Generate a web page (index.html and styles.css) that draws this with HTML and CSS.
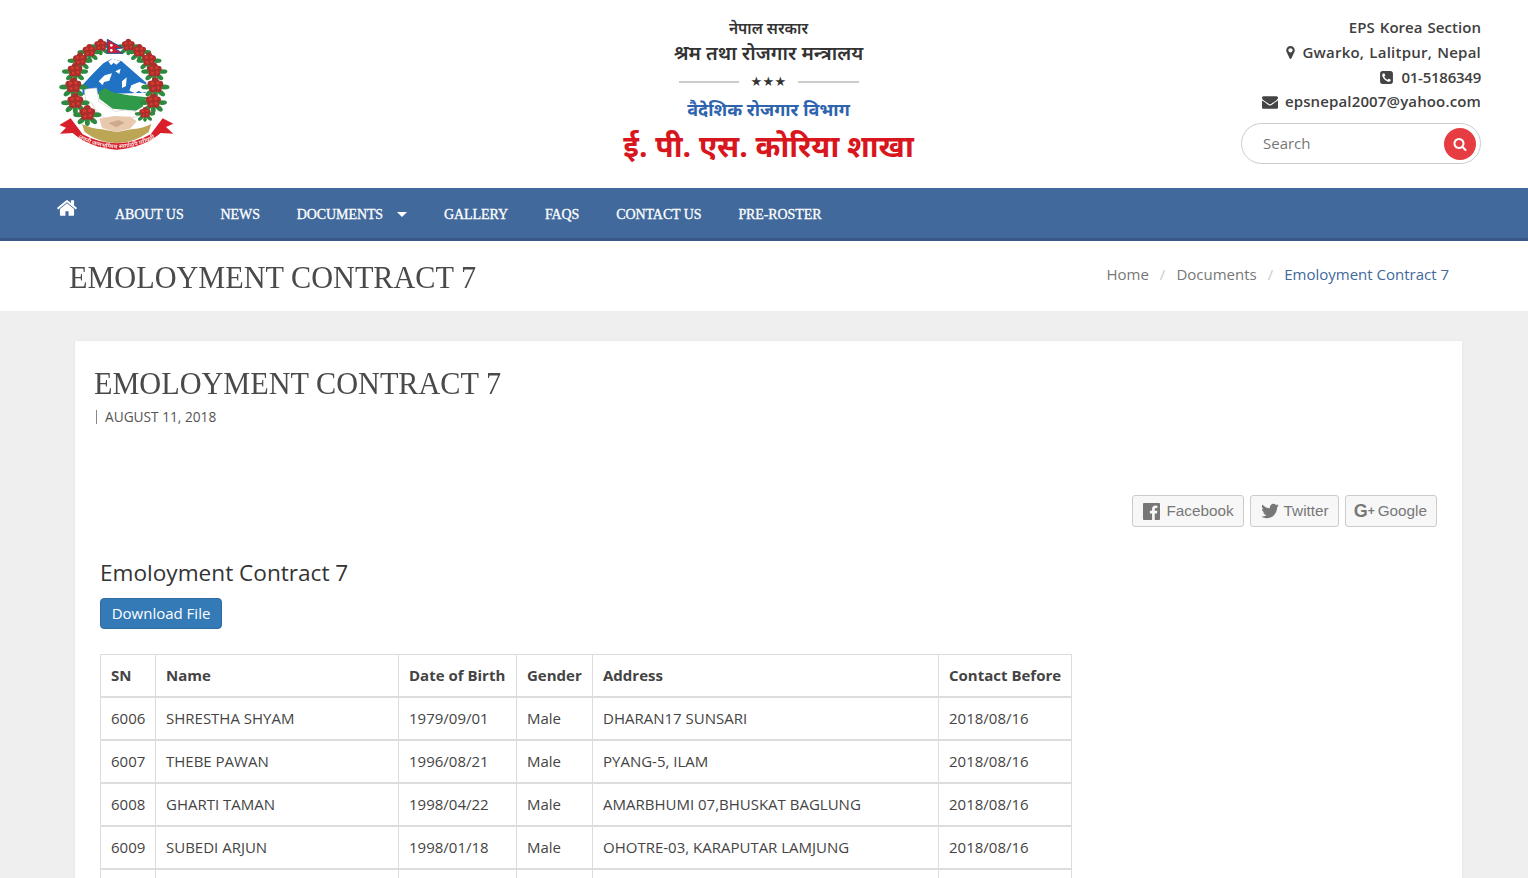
FILE: index.html
```html
<!DOCTYPE html>
<html lang="ne">
<head>
  <meta charset="UTF-8" />
  <meta name="viewport" content="width=device-width, initial-scale=1.0"/>
  <title>Emoloyment Contract 7 | EPS Korea Section</title>
  <link rel="stylesheet" href="styles.css">
</head>
<body>

  <!-- HEADER -->
  <header class="top">
    <a class="logo" href="#">
      <svg width="120" height="120" viewBox="48 48 360 360" role="img" aria-label="Emblem of Nepal">
        <defs>
          <g id="flower">
            <g fill="#2d8a3e">
              <ellipse cx="-22" cy="4" rx="12" ry="6"/><ellipse cx="22" cy="4" rx="12" ry="6"/>
              <ellipse cx="-14" cy="18" rx="11" ry="6" transform="rotate(-40 -14 18)"/>
              <ellipse cx="14" cy="18" rx="11" ry="6" transform="rotate(40 14 18)"/>
              <ellipse cx="0" cy="22" rx="6" ry="9"/>
            </g>
            <circle r="15" fill="#a92f2b"/>
            <g fill="#a92f2b">
              <circle cx="0" cy="-11" r="8"/><circle cx="11" cy="-3" r="8"/><circle cx="7" cy="9" r="8"/>
              <circle cx="-7" cy="9" r="8"/><circle cx="-11" cy="-3" r="8"/>
            </g>
            <g fill="#d93a30">
              <circle cx="-7" cy="-5" r="4"/><circle cx="6" cy="-6" r="4"/><circle cx="7" cy="6" r="3.500"/>
              <circle cx="-5" cy="8" r="3.500"/>
            </g>
          </g>
        </defs>
        <!-- mountain -->
        <path d="M128 194l32-34 30-30 25-14 30 8 30 26 44 38-2 30-190 6z" fill="#1f72c4"/>
        <path d="M205 124l12-8 24 8-12 10-8-6-8 8zM176 184l18-18 22-6-8 22-16 4-4 10zM226 154l16-8-4 16zM268 212l6-16 24-10 22 8 2 20-16 4-10-6-10 8zM246 184l14-12-2 26-12 6z" fill="#fff"/>
        <!-- hills -->
        <path d="M176 216l18-12 28 14 44 8 54 6-12 28-20 12-70-6-40-30z" fill="#2f9a49"/>
        <path d="M134 208l36-4 6 40 50 30 30-4 30 4 6 16-34 4-66 0-30-30-6-14-18-8-4-24z" fill="#fff" stroke="#cfcfcf" stroke-width="2"/>
        <!-- wheat -->
        <path d="M126 312q28 14 60 16l44 8 44-8q32-2 60-16l-8 24q-42 32-96 34-54-2-96-34z" fill="#bda556"/>
        <!-- hands -->
        <path d="M178 296l44-8 50 2 18 14-20 22-44 10-40-12z" fill="#e9c9ad"/>
        <path d="M205 310l30-10 20 8-26 14z" fill="#cfa98c"/>
        <!-- banner -->
        <path d="M58 315l34-20 36 48q46 26 102 27 56-1 102-27l36-48 32 16-22 10 22 20-38-2q-50 44-132 50-82-6-132-50l-38 2 18-18z" fill="#d9202a"/>
        <path id="motto" d="M108 349q50 34 122 36 72-2 122-36" fill="none"/>
        <text class="motto"><textPath href="#motto" startOffset="50%" text-anchor="middle">जननी जन्मभूमिश्च स्वर्गादपि गरीयसी</textPath></text>
        <!-- wreath -->
        <use href="#flower" transform="translate(182 75) scale(1)"/>
        <use href="#flower" transform="translate(148 92) scale(1.05)"/>
        <use href="#flower" transform="translate(120 118) scale(1.1)"/>
        <use href="#flower" transform="translate(105 150) scale(1.15)"/>
        <use href="#flower" transform="translate(100 196) scale(1.25)"/>
        <use href="#flower" transform="translate(106 243) scale(1.25)"/>
        <use href="#flower" transform="translate(142 279) scale(1.25)"/>
        <use href="#flower" transform="translate(265 75) scale(1)"/>
        <use href="#flower" transform="translate(298 92) scale(1.05)"/>
        <use href="#flower" transform="translate(327 118) scale(1.1)"/>
        <use href="#flower" transform="translate(343 150) scale(1.15)"/>
        <use href="#flower" transform="translate(346 196) scale(1.25)"/>
        <use href="#flower" transform="translate(340 243) scale(1.2)"/>
        <use href="#flower" transform="translate(315 278) scale(.9)"/>
        <!-- flag -->
        <path d="M202 58l46 26-22 2 22 14h-46z" fill="#c8202f" stroke="#2a4a9a" stroke-width="3"/>
        <circle cx="214" cy="76" r="4" fill="#fff"/><circle cx="214" cy="91" r="4" fill="#fff"/>
      </svg>
    </a>

    <div class="office">
      <div class="gov">नेपाल सरकार</div>
      <div class="ministry">श्रम तथा रोजगार मन्त्रालय</div>
      <div class="divider"><span class="stars">★★★</span></div>
      <div class="dept">वैदेशिक रोजगार विभाग</div>
      <div class="branch">ई. पी. एस. कोरिया शाखा</div>
    </div>

    <div class="contact">
      <div class="c-name">EPS Korea Section</div>
      <div class="c-addr"><svg class="ico ico-pin" viewBox="0 0 1792 1792"><path d="M1152 640q0-106-75-181t-181-75-181 75-75 181 75 181 181 75 181-75 75-181zm256 0q0 109-33 179l-364 774q-16 33-47.500 52t-67.500 19-67.500-19-46.500-52l-365-774q-33-70-33-179 0-212 150-362t362-150 362 150 150 362z"/></svg>Gwarko, Lalitpur, Nepal</div>
      <div class="c-tel"><svg class="ico" viewBox="0 0 1792 1792"><path d="M1408 1193q0-11-2-16t-18-16.500-40.500-25-47.500-26.500-45.500-25-28.500-15q-5-3-19-13t-25-15-21-5q-15 0-36.500 20.500t-39.500 45-38.500 45-33.500 20.500q-7 0-16.500-3.500t-15.500-6.500-17-9.500-14-8.500q-99-55-170-126.500t-127-170.500q-2-3-8.500-14t-9.500-17-6.500-15.500-3.500-16.500q0-13 20.500-33.500t45-38.500 45-39.500 20.500-36.500q0-10-5-21t-15-25-13-19q-3-6-15-28.500t-25-45.500-26.500-47.500-25-40.500-16.500-18-16-2q-48 0-101 22-46 21-80 94.500t-34 130.500q0 16 2.500 34t5 30.500 9 33 10 29.500 12.500 33 11 30q60 164 216.500 320.500t320.500 216.500q6 2 30 11t33 12.500 29.500 10 33 9 30.500 5 34 2.500q57 0 130.500-34t94.500-80q22-53 22-101zm256-777v960q0 119-84.500 203.500t-203.500 84.500h-960q-119 0-203.500-84.500t-84.500-203.500v-960q0-119 84.500-203.500t203.500-84.500h960q119 0 203.500 84.500t84.500 203.500z"/></svg>01-5186349</div>
      <div><svg class="ico ico-mail" viewBox="0 0 1792 1792"><path d="M1792 710v794q0 66-47 113t-113 47h-1472q-66 0-113-47t-47-113v-794q44 49 101 87 362 246 497 345 57 42 92.500 65.500t94.500 48 110 24.500h2q51 0 110-24.500t94.500-48 92.500-65.500q170-123 498-345 57-39 100-87zm0-294q0 79-49 151t-122 123q-376 261-468 325-10 7-42.500 30.500t-54 38-52 32.500-57.500 27-50 9h-2q-23 0-50-9t-57.500-27-52-32.500-54-38-42.500-30.500q-91-64-262-182.500t-205-142.500q-62-42-117-115.500t-55-136.500q0-78 41.500-130t118.500-52h1472q65 0 112.500 47t47.500 113z"/></svg>epsnepal2007@yahoo.com</div>
      <div class="search">
        <span class="search-text">Search</span>
        <span class="search-btn"><svg viewBox="0 0 1792 1792"><path d="M1216 832q0-185-131.500-316.500t-316.500-131.500-316.500 131.500-131.500 316.500 131.500 316.500 316.500 131.500 316.500-131.500 131.500-316.500zm512 832q0 52-38 90t-90 38q-54 0-90-38l-343-342q-179 124-399 124-143 0-273.500-55.500t-225-150-150-225-55.500-273.500 55.500-273.500 150-225 225-150 273.500-55.500 273.500 55.500 225 150 150 225 55.500 273.500q0 220-124 399l343 343q37 37 37 90z"/></svg></span>
      </div>
    </div>
  </header>

  <!-- NAV -->
  <nav class="mainnav">
    <a class="home" href="#" aria-label="Home"><svg viewBox="0 0 1792 1792"><path d="M1472 992v480q0 26-19 45t-45 19h-384v-384h-256v384h-384q-26 0-45-19t-19-45v-480q0-1 .5-3t.5-3l575-474 575 474q1 2 1 6zm223-69l-62 74q-8 9-21 11h-3q-13 0-21-7l-692-577-692 577q-12 8-24 7-13-2-21-11l-62-74q-8-10-7-23.500t11-21.500l719-599q32-26 76-26t76 26l244 204v-195q0-14 9-23t23-9h192q14 0 23 9t9 23v408l219 182q10 8 11 21.500t-7 23.500z"/></svg></a>
    <a href="#">ABOUT US</a>
    <a href="#">NEWS</a>
    <a href="#">DOCUMENTS<span class="caret"></span></a>
    <a href="#">GALLERY</a>
    <a href="#">FAQS</a>
    <a href="#">CONTACT US</a>
    <a href="#">PRE-ROSTER</a>
  </nav>

  <!-- PAGE TITLE -->
  <section class="titlebar">
    <h1>EMOLOYMENT CONTRACT 7</h1>
    <ol class="crumbs">
      <li><a href="#">Home</a></li>
      <li><a href="#">Documents</a></li>
      <li class="active">Emoloyment Contract 7</li>
    </ol>
  </section>

  <!-- CONTENT -->
  <main class="wrap">
    <article class="card">
      <h2>EMOLOYMENT CONTRACT 7</h2>
      <p class="date">AUGUST 11, 2018</p>

      <div class="share">
        <a href="#"><svg class="share-ico" viewBox="128 128 1536 1536"><path d="M1579 128q35 0 60 25t25 60v1366q0 35-25 60t-60 25h-391v-595h199l30-232h-229v-148q0-56 23.500-84t91.500-28l122-1v-207q-63-9-178-9-136 0-217.500 80t-81.500 226v171h-200v232h200v595h-735q-35 0-60-25t-25-60v-1366q0-35 25-60t60-25h1366z"/></svg>Facebook</a>
        <a href="#"><svg class="share-ico tw" viewBox="0 0 1792 1792"><path d="M1684 408q-67 98-162 167 1 14 1 42 0 130-38 259.500t-115.500 248.500-184.500 210.500-258 146-323 54.500q-271 0-496-145 35 4 78 4 225 0 401-138-105-2-188-64.500t-114-159.500q33 5 61 5 43 0 85-11-112-23-185.500-111.500t-73.500-205.500v-4q68 38 146 41-66-44-105-115t-39-154q0-88 44-163 121 149 294.500 238.500t371.500 99.500q-8-38-8-74 0-134 94.500-228.500t228.500-94.500q140 0 236 102 109-21 205-78-37 115-142 178 92-10 184-50z"/></svg>Twitter</a>
        <a href="#"><span class="gplus">G<small>+</small></span>Google</a>
      </div>

      <div class="post">
        <h3>Emoloyment Contract 7</h3>
        <a class="btn" href="#">Download File</a>

        <table class="list">
          <thead>
            <tr><th>SN</th><th>Name</th><th>Date of Birth</th><th>Gender</th><th>Address</th><th>Contact Before</th></tr>
          </thead>
          <tbody>
            <tr><td>6006</td><td>SHRESTHA SHYAM</td><td>1979/09/01</td><td>Male</td><td>DHARAN17 SUNSARI</td><td>2018/08/16</td></tr>
            <tr><td>6007</td><td>THEBE PAWAN</td><td>1996/08/21</td><td>Male</td><td>PYANG-5, ILAM</td><td>2018/08/16</td></tr>
            <tr><td>6008</td><td>GHARTI TAMAN</td><td>1998/04/22</td><td>Male</td><td>AMARBHUMI 07,BHUSKAT BAGLUNG</td><td>2018/08/16</td></tr>
            <tr><td>6009</td><td>SUBEDI ARJUN</td><td>1998/01/18</td><td>Male</td><td>OHOTRE-03, KARAPUTAR LAMJUNG</td><td>2018/08/16</td></tr>
            <tr><td>&nbsp;</td><td></td><td></td><td></td><td></td><td></td></tr>
          </tbody>
        </table>
      </div>
    </article>
  </main>

</body>
</html>
```

FILE: styles.css
```css
/* ===== Reset ===== */
*, *::before, *::after { margin:0; padding:0; box-sizing:border-box; }
html, body { height:100vh; overflow:hidden; }
body {
  font-family:'Open Sans', 'Noto Sans', sans-serif;
  background:#EFEFEF; color:#444;
  font-size:14px;
}
a { text-decoration:none; color:inherit; }
ol { list-style:none; }

/* ===== Variables ===== */
:root {
  --nav:#41699B;
  --nav-dark:#38598A;
  --text:#444;
  --serif:'Liberation Serif', 'Noto Serif', serif;
}

/* ===== Header ===== */
.top {
  background:#fff; height:188px;
  display:grid; grid-template-columns:1fr 360px 1fr; align-items:start;
  padding:0 47px 0 56px;
}
.logo { display:block; padding-top:36px; }
.logo svg { display:block; filter:blur(.3px); }
.motto { font-size:17px; font-weight:700; fill:#f6dcdc; }

.office { text-align:center; color:#333; padding-top:16px; }
.gov { font-size:15.5px; line-height:24px; font-weight:600; }
.ministry { font-size:19.6px; line-height:26px; font-weight:600; }
.divider {
  display:flex; align-items:center; justify-content:center; gap:11px;
  width:180px; margin:7px auto 0; height:18px;
}
.divider::before, .divider::after { content:''; flex:1; height:2px; background:#ccc; }
.stars { font-size:13px; line-height:18px; letter-spacing:.4px; color:#333; font-family:'DejaVu Sans', sans-serif; margin-top:-1px; }
.dept { font-size:18px; line-height:26px; font-weight:700; color:#2E63AE; margin-top:5px; }
.branch { font-size:30px; line-height:42px; font-weight:700; color:#D7161E; margin-top:3px; }

.contact {
  text-align:right; font-weight:600; font-size:15px; line-height:24.8px; padding-top:15px; color:#404040;
  letter-spacing:.14px; word-spacing:1px;
}
.c-name { letter-spacing:.05px; }
.c-addr { letter-spacing:.24px; }
.c-tel { letter-spacing:-.25px; }
.ico { width:15px; height:15px; fill:#444; vertical-align:-2px; margin-right:7px; }
.ico-pin { margin-right:4px; }
.ico-mail { width:16px; height:16px; margin-right:7px; vertical-align:-3px; }
.search {
  width:240px; height:41px; margin:9px 0 0 auto;
  border:1px solid #ccc; border-radius:21px;
  display:flex; align-items:center; justify-content:space-between;
  padding:0 4px 0 21px; letter-spacing:0;
}
.search-text { font-weight:400; font-size:15px; color:#777; }
.search-btn {
  width:32px; height:32px; border-radius:50%; background:#E53D41;
  display:flex; align-items:center; justify-content:center;
}
.search-btn svg { width:14px; height:14px; fill:#fff; }

/* ===== Nav ===== */
.mainnav {
  background:var(--nav); border-bottom:3px solid var(--nav-dark);
  height:53px; padding-left:56px;
  display:flex; align-items:center; gap:37px;
  font-family:var(--serif); font-size:14px; letter-spacing:-.1px; color:#fff;
}
.mainnav a { display:block; line-height:50px; padding-top:3px; -webkit-text-stroke:.3px #fff; }
.mainnav .home { width:22px; height:50px; padding-top:0; }
.home svg { display:block; width:22px; height:22px; fill:#fff; margin-top:9px; }
.caret {
  display:inline-block; margin-left:14px; vertical-align:2px;
  border-left:5px solid transparent; border-right:5px solid transparent; border-top:5px solid #fff;
}

/* ===== Title bar ===== */
.titlebar {
  background:#fff; height:70px; padding:0 79px 0 69px;
  display:flex; justify-content:space-between; align-items:flex-start;
}
.titlebar h1, .card h2 {
  font-family:var(--serif); font-weight:400; font-size:32px; line-height:36px; color:#4a4a4a;
  transform:scaleX(.945); transform-origin:left center;
}
.titlebar h1 { margin-top:18px; }
.crumbs { display:flex; font-size:15px; line-height:20px; color:#777; padding-top:23px; }
.crumbs li + li::before { content:'/'; color:#ccc; margin:0 11px; }
.crumbs .active { color:#41699B; }

/* ===== Content ===== */
.wrap { padding:30px 66px 0 75px; }
.card { background:#fff; padding:24px 25px 30px 19px; box-shadow:0 0 2px rgba(0,0,0,.06); }
.date { display:flex; align-items:center; gap:8px; font-size:13.7px; line-height:20px; color:#555; margin:6px 0 0 2px; }
.date::before { content:''; width:1px; height:14px; background:#888; }

.share { display:flex; justify-content:flex-end; gap:6px; margin-top:68px; font-family:'Liberation Sans', Arial, sans-serif; font-size:15.3px; color:#777; }
.share a {
  height:32px; display:flex; align-items:center; padding:0 9px 0 10px;
  background:#f7f7f7; border:1px solid #ccc; border-radius:3px;
}
.share-ico { width:17px; height:17px; fill:#777; margin-right:6px; }
.share-ico.tw { width:20px; height:20px; margin-right:4px; margin-left:-1px; }
.gplus { font-weight:700; font-size:18px; margin-right:3px; margin-left:-2px; }
.gplus small { font-size:12px; font-weight:700; vertical-align:2px; }

.post { padding-left:6px; margin-top:29px; }
.post h3 { font-weight:400; font-size:22.6px; line-height:34px; color:#333; }
.btn {
  display:inline-block; margin-top:8px; height:31px; width:122px; text-align:center; line-height:29px;
  background:#337AB7; border:1px solid #2E6DA4; border-radius:4px; color:#fff; font-size:15px;
}

.list { border-collapse:collapse; margin-top:25px; width:972px; table-layout:fixed; color:#444; }
.list th, .list td { border:1px solid #ddd; border-bottom-width:2px; padding:0 10px 1px; height:43px; text-align:left; font-size:15px; white-space:nowrap; }
.list th { font-weight:700; height:42px; }
.list th:nth-child(1) { width:55px; }
.list th:nth-child(2) { width:243px; }
.list th:nth-child(3) { width:118px; }
.list th:nth-child(4) { width:76px; }
.list th:nth-child(5) { width:346px; }
.list th:nth-child(6) { width:133px; }
```
